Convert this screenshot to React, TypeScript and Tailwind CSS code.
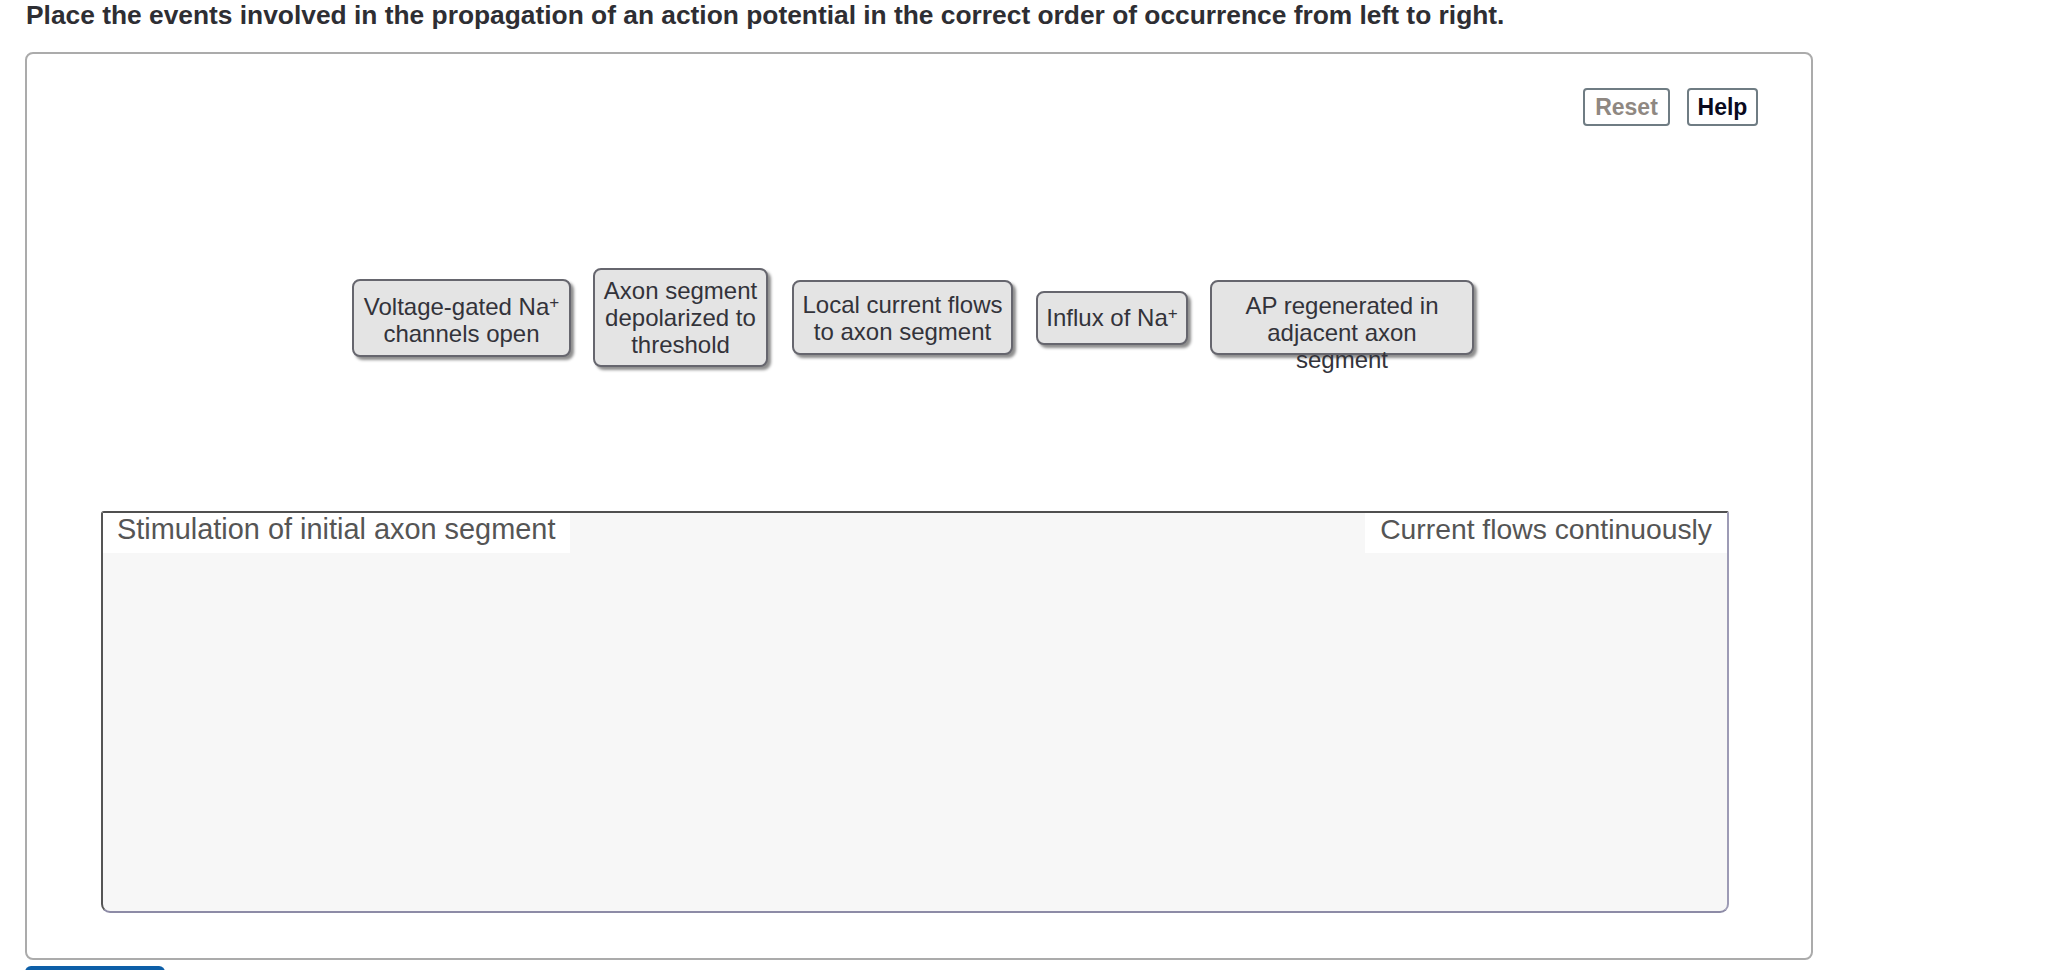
import React from "react";

const font = { fontFamily: '"Liberation Sans", Arial, sans-serif' };

function Card({
  className,
  children,
}: {
  className: string;
  children: React.ReactNode;
}) {
  return (
    <div
      className={
        "shrink-0 rounded-[8px] border-2 border-[#66666e] bg-[#e4e4e4] text-center text-[24px] leading-[27px] text-[#33333a] shadow-[3px_3px_3px_rgba(0,0,0,0.45)] " +
        className
      }
    >
      {children}
    </div>
  );
}

function Sup() {
  return <sup className="text-[17px] top-[-0.42em]">+</sup>;
}

export default function App() {
  return (
    <div className="min-h-[970px] bg-white" style={font}>
      <div className="pl-[26px] h-[30px] text-[26.35px] leading-[30px] font-bold text-[#2e2e33] whitespace-nowrap">
        Place the events involved in the propagation of an action potential in the correct order of occurrence from left to right.
      </div>
      <div className="mt-[22px] ml-[25px] w-[1788px] h-[908px] rounded-[8px] border-2 border-[#ababab] flex flex-col">
        <div className="flex justify-end gap-[17px] pt-[34px] pr-[53px]">
          <button className="w-[87px] h-[38px] rounded-[4px] border-2 border-[#6f7c83] bg-white text-[23px] font-bold text-[#8f8882] leading-none">
            Reset
          </button>
          <button className="w-[71px] h-[38px] rounded-[4px] border-2 border-[#6f7c83] bg-white text-[23px] font-bold text-[#0a0a1e] leading-none">
            Help
          </button>
        </div>
        <div className="mt-[142px] h-[99px] pl-[325px] flex items-center gap-[22px]">
          <Card className="w-[219px] h-[78px] px-[2px] pt-[5px] flex flex-col justify-center">
            <div>
              Voltage-gated Na<Sup />
            </div>
            <div>channels open</div>
          </Card>
          <Card className="w-[175px] h-[99px] px-[4px] flex flex-col justify-center">
            <div>Axon segment depolarized to threshold</div>
          </Card>
          <Card className="w-[221px] h-[75px] px-[6px] ml-[2px] flex flex-col justify-center">
            <div>Local current flows to axon segment</div>
          </Card>
          <Card className="w-[152px] h-[54px] ml-[1px] px-[2px] flex flex-col justify-center">
            <div>
              Influx of Na<Sup />
            </div>
          </Card>
          <Card className="w-[264px] h-[75px] px-[30px] pt-[10px]">
            <div>AP regenerated in adjacent axon segment</div>
          </Card>
        </div>
        <div className="mt-[144px] ml-[74px] w-[1628px] h-[402px] bg-[#f7f7f7] border-2 border-t-[#505050] border-l-[#555555] border-r-[#9d9bb5] border-b-[#8d8ba6] rounded-tl-[3px] rounded-tr-[2px] rounded-b-[9px] flex justify-between items-start">
          <div className="h-[40px] bg-white pl-[14px] pr-[15px] text-[28.9px] leading-[33px] text-[#555555] whitespace-nowrap">
            Stimulation of initial axon segment
          </div>
          <div className="h-[40px] bg-white pl-[15px] pr-[15px] text-[28.3px] leading-[33px] text-[#555555] whitespace-nowrap">
            Current flows continuously
          </div>
        </div>
      </div>
      <div className="mt-[6px] ml-[25px] w-[140px] h-[20px] rounded-t-[6px] bg-[#0d5fa8]" />
    </div>
  );
}
